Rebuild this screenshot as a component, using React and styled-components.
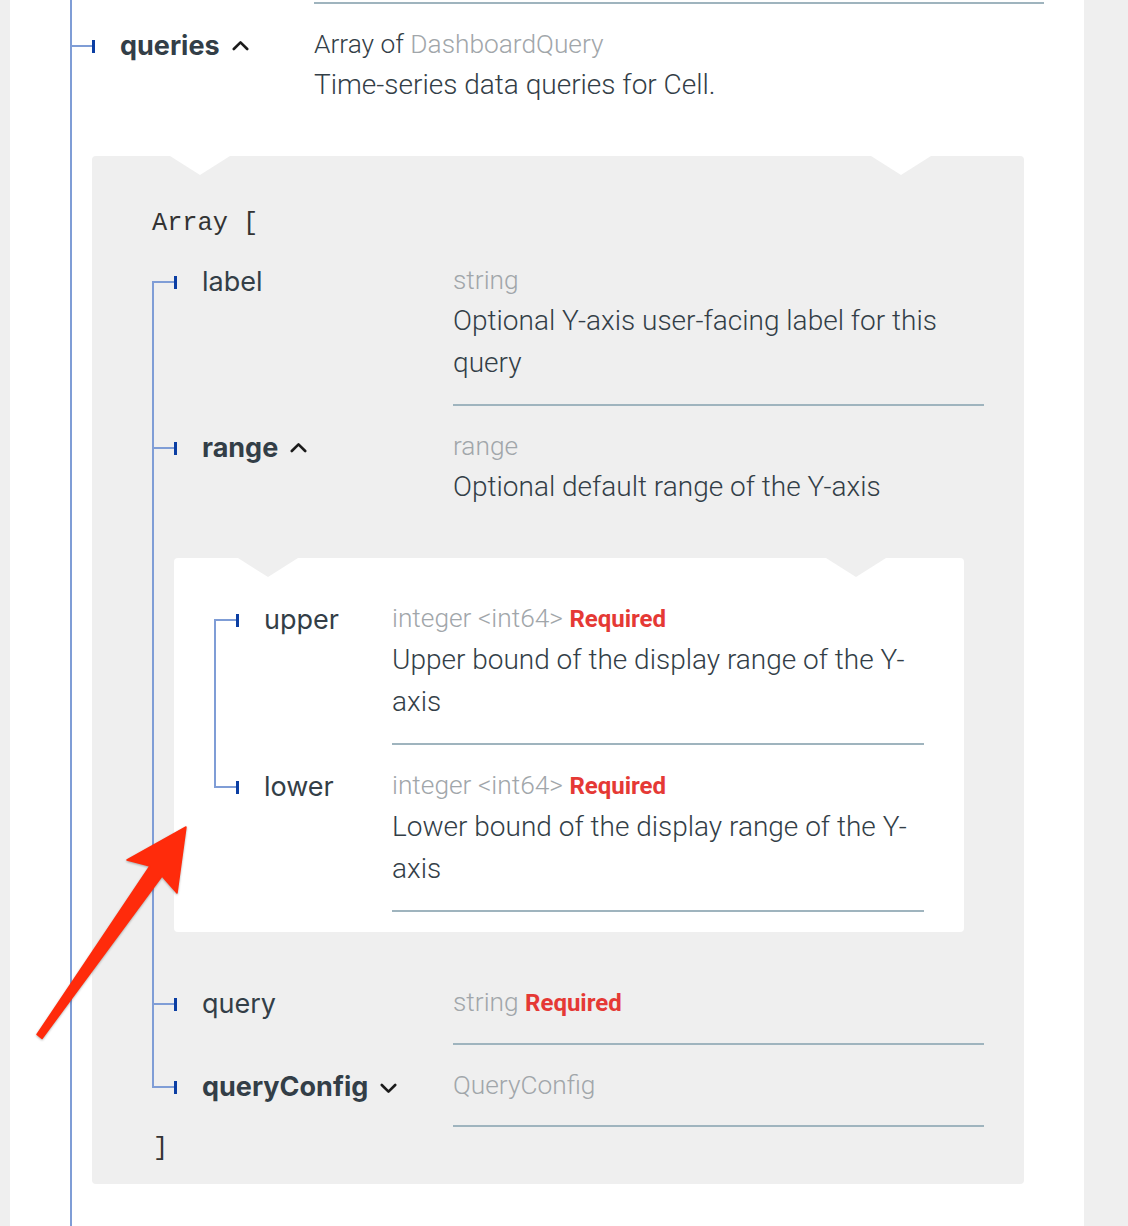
import React from 'react';
import styled, { createGlobalStyle, css } from 'styled-components';

const C = {
  page: '#efefef',
  panel: '#efefef',
  white: '#ffffff',
  line: '#7f9dd6',
  tick: '#0b3ea3',
  rule: '#9fb4be',
  text: '#333e47',
  muted: '#a1a6aa',
  required: '#e53935',
  arrow: '#ff2b0b',
};

const GlobalStyle = createGlobalStyle`
  *, *::before, *::after { box-sizing: border-box; }
  html, body { margin: 0; padding: 0; background: ${C.page}; overflow: hidden; }
`;

const Page = styled.div`
  position: relative;
  height: 1226px;
  overflow: hidden;
  display: flex;
`;

const Content = styled.main`
  margin-left: 10px;
  width: 1074px;
  height: 1226px;
  padding-left: 60px;
  background: ${C.white};
  display: flex;
  flex-direction: column;
`;

const Tree = styled.div`
  display: flex;
  flex-direction: column;
  width: ${(p) => p.$width}px;
`;

const ClippedRow = styled.div`
  border-left: 2px solid ${C.line};
  height: 4px;
  padding-left: ${(p) => p.$name - 2}px;
`;

const ClippedRule = styled.div`
  height: 4px;
  border-bottom: 2px solid ${C.rule};
`;

const Row = styled.div`
  display: grid;
  grid-template-columns: ${(p) => p.$name}px 1fr;
`;

const NameCell = styled.div`
  position: relative;
  padding: 22px 0 18px 2px;
  &::before {
    content: '';
    position: absolute;
    left: 0;
    width: 2px;
    background: ${C.line};
    ${(p) =>
      p.$last
        ? css`top: 0; height: 43px;`
        : p.$first
        ? css`top: 41px; bottom: 0;`
        : css`top: 0; bottom: 0;`}
  }
`;

const NameLine = styled.div`
  display: flex;
  align-items: center;
  height: 40px;
`;

const Branch = styled.span`
  flex: none;
  width: 20px;
  height: 2px;
  background: ${C.line};
`;

const Tick = styled.span`
  flex: none;
  width: 3px;
  height: 13px;
  background: ${C.tick};
  margin-right: 25px;
`;

const PropName = styled.span`
  font-family: Inter, 'Noto Sans', sans-serif;
  font-size: 27px;
  font-weight: ${(p) => (p.$bold ? 700 : 400)};
  color: ${C.text};
  white-space: nowrap;
  line-height: 40px;
`;

const Chevron = styled.svg`
  flex: none;
  width: 17px;
  height: 11px;
  margin-left: 12px;
  margin-top: ${(p) => (p.$down ? '3px' : '-1px')};
`;

const DetailCell = styled.div`
  padding: 20px 0;
  border-bottom: ${(p) => (p.$ruled ? `2px solid ${C.rule}` : 'none')};
  font-family: Roboto, 'Liberation Sans', sans-serif;
  font-weight: 300;
`;

const TypeLine = styled.div`
  font-size: 26.3px;
  line-height: 40px;
  color: ${C.muted};
`;

const Plain = styled.span`
  color: ${C.text};
`;

const Required = styled.span`
  color: ${C.required};
  font-size: 24px;
  font-weight: 700;
`;

const Description = styled.div`
  font-size: 28px;
  line-height: 42px;
  color: ${C.text};
`;

const NestedRow = styled.div`
  border-left: 2px solid ${C.line};
  padding: 30px 20px ${(p) => p.$bottom ?? 30}px 20px;
`;

const Panel = styled.div`
  position: relative;
  background: ${(p) => p.$bg};
  border-radius: 4px;
  padding: ${(p) => p.$pad};
  &::before,
  &::after {
    content: '';
    position: absolute;
    top: 0;
    width: 0;
    height: 0;
    border-left: 30px solid transparent;
    border-right: 30px solid transparent;
    border-top: 19px solid ${(p) => p.$notch};
  }
  &::before { left: ${(p) => p.$notchLeft}px; }
  &::after { right: ${(p) => p.$notchRight}px; }
`;

const ArrayMark = styled.div`
  font-family: 'Liberation Mono', 'DejaVu Sans Mono', monospace;
  font-size: 25.3px;
  line-height: 32px;
  color: #333;
  padding-left: ${(p) => p.$indent || 0}px;
  margin-top: ${(p) => p.$top || 0}px;
  white-space: pre;
`;

const Arrow = styled.svg`
  position: absolute;
  left: 0;
  top: 0;
  pointer-events: none;
  filter: drop-shadow(0 1px 1px rgba(0, 0, 0, 0.3));
`;

function Toggle({ down }) {
  return (
    <Chevron $down={down} viewBox="0 0 17 11" fill="none">
      <polyline
        points={down ? '1.8,2 8.5,8.7 15.2,2' : '1.8,9 8.5,2.3 15.2,9'}
        stroke="#1b1b1b"
        strokeWidth="2.6"
        strokeLinecap="round"
        strokeLinejoin="round"
      />
    </Chevron>
  );
}

function Name({ children, bold, toggle, first, last }) {
  return (
    <NameCell $first={first} $last={last}>
      <NameLine>
        <Branch />
        <Tick />
        <PropName $bold={bold}>{children}</PropName>
        {toggle && <Toggle down={toggle === 'down'} />}
      </NameLine>
    </NameCell>
  );
}

function Field({ col, name, bold, toggle, first, last, type, required, desc, ruled = true }) {
  return (
    <Row $name={col}>
      <Name bold={bold} toggle={toggle} first={first} last={last}>
        {name}
      </Name>
      <DetailCell $ruled={ruled}>
        <TypeLine>
          {type}
          {required && (
            <>
              {' '}
              <Required>Required</Required>
            </>
          )}
        </TypeLine>
        {desc && desc.map((d, i) => <Description key={i}>{d}</Description>)}
      </DetailCell>
    </Row>
  );
}

export default function App() {
  return (
    <>
      <GlobalStyle />
      <Page>
        <Content>
          <Tree $width={974}>
            <ClippedRow $name={244}>
              <ClippedRule />
            </ClippedRow>
            <Row $name={244}>
              <Name bold toggle="up">
                queries
              </Name>
              <DetailCell>
                <TypeLine>
                  <Plain>Array of </Plain>DashboardQuery
                </TypeLine>
                <Description>Time-series data queries for Cell.</Description>
              </DetailCell>
            </Row>
            <NestedRow $bottom={45}>
              <Panel
                $bg={C.panel}
                $notch={C.white}
                $notchLeft={78}
                $notchRight={93}
                $pad="20px 40px 19px 60px"
              >
                <ArrayMark $top={32}>Array [</ArrayMark>
                <Tree $width={832}>
                  <Field
                    col={301}
                    first
                    name="label"
                    type="string"
                    desc={['Optional Y-axis user-facing label for this', 'query']}
                  />
                  <Field
                    col={301}
                    name="range"
                    bold
                    toggle="up"
                    type="range"
                    ruled={false}
                    desc={['Optional default range of the Y-axis']}
                  />
                  <NestedRow>
                    <Panel
                      $bg={C.white}
                      $notch={C.panel}
                      $notchLeft={64}
                      $notchRight={78}
                      $pad="20px 40px 20px 40px"
                    >
                      <Tree $width={710}>
                        <Field
                          col={178}
                          first
                          name="upper"
                          type="integer <int64>"
                          required
                          desc={['Upper bound of the display range of the Y-', 'axis']}
                        />
                        <Field
                          col={178}
                          last
                          name="lower"
                          type="integer <int64>"
                          required
                          desc={['Lower bound of the display range of the Y-', 'axis']}
                        />
                      </Tree>
                    </Panel>
                  </NestedRow>
                  <Field col={301} name="query" type="string" required />
                  <Field col={301} last name="queryConfig" bold toggle="down" type="QueryConfig" />
                </Tree>
                <ArrayMark $top={6} $indent={1}>]</ArrayMark>
              </Panel>
            </NestedRow>
          </Tree>
        </Content>
        <Arrow width="1128" height="1226" viewBox="0 0 1128 1226">
          <polygon
            points="186,827 177,893 162,876 42,1038.5 37,1034.5 150,866 127,860"
            fill={C.arrow}
            stroke={C.arrow}
            strokeWidth="1.5"
            strokeLinejoin="round"
          />
        </Arrow>
      </Page>
    </>
  );
}
